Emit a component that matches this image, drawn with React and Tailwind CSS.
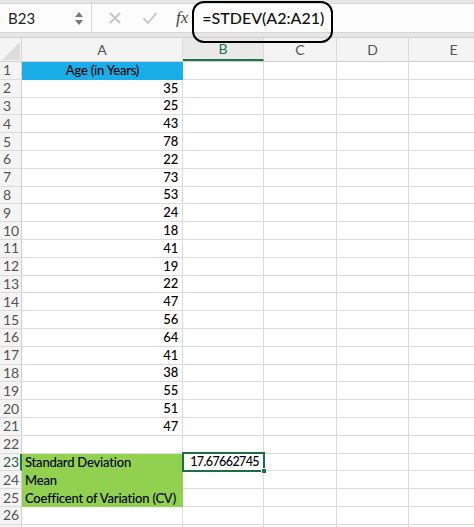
const ages = [35, 25, 43, 78, 22, 73, 53, 24, 18, 41, 19, 22, 47, 56, 64, 41, 38, 55, 51, 47];

const font = { fontFamily: "Lato, 'Liberation Sans', sans-serif" };

function rowData(n) {
  if (n === 1) return { A: "Age (in Years)", aStyle: "bg-[#1aaee8] justify-center text-[#0d2433]", fill: true };
  if (n >= 2 && n <= 21) return { A: String(ages[n - 2]), aStyle: "justify-end pr-[4px]" };
  if (n === 23) return { A: "Standard Deviation", B: "17.67662745", aStyle: "bg-[#92d050] pl-[3px]", fill: true };
  if (n === 24) return { A: "Mean", aStyle: "bg-[#92d050] pl-[3px]", fill: true };
  if (n === 25) return { A: "Coefficent of Variation (CV)", aStyle: "bg-[#92d050] pl-[3px]", fill: true };
  return { aStyle: "" };
}

function Toolbar() {
  return (
    <div className="h-[38px] bg-[#e6e6e6] pt-[3px] border-b border-[#d0d0d0]">
      <div className="h-[30px] bg-[#fdfdfd] flex items-center border-y border-[#d6d6d6]">
        <div className="w-[92px] h-full flex items-center justify-between pl-[8px] pr-[8px] border-r border-[#d6d6d6]">
          <span className="text-[15px] text-[#222]">B23</span>
          <div className="flex flex-col items-center gap-[3px]">
            <div className="w-0 h-0 border-l-[4px] border-r-[4px] border-b-[5px] border-l-transparent border-r-transparent border-b-[#777]" />
            <div className="w-0 h-0 border-l-[4px] border-r-[4px] border-t-[5px] border-l-transparent border-r-transparent border-t-[#777]" />
          </div>
        </div>
        <svg className="ml-[16px]" width="14" height="14" viewBox="0 0 14 14">
          <path d="M2 2 L12 12 M12 2 L2 12" stroke="#c4c4c4" strokeWidth="1.8" />
        </svg>
        <svg className="ml-[20px]" width="16" height="14" viewBox="0 0 16 14">
          <path d="M1.5 7.5 L6 12 L14.5 2" stroke="#c4c4c4" strokeWidth="1.8" fill="none" />
        </svg>
        <span className="ml-[18px] text-[17px] italic text-[#444]" style={{ fontFamily: "'Liberation Serif', serif" }}>
          fx
        </span>
        <span className="ml-[14px] text-[16px] font-medium text-[#111]">=STDEV(A2:A21)</span>
      </div>
    </div>
  );
}

const cols = [
  { key: "A", w: "w-[161px]" },
  { key: "B", w: "w-[81px]" },
  { key: "C", w: "w-[73px]" },
  { key: "D", w: "w-[72px]" },
  { key: "E", w: "w-[90px]" },
];

function HeaderRow() {
  return (
    <div className="flex h-[24px] bg-[#f4f4f4] border-b border-[#cfcfcf]">
      <div className="w-[22px] shrink-0 relative border-r border-[#d4d4d4]">
        <svg className="absolute right-[1px] bottom-[1px]" width="18" height="18" viewBox="0 0 18 18">
          <path d="M18 0 L18 18 L0 18 Z" fill="#dcdcdc" />
        </svg>
      </div>
      {cols.map((c) => (
        <div
          key={c.key}
          className={`${c.w} shrink-0 flex items-center justify-center text-[14px] border-r border-[#dcdcdc] ${
            c.key === "B" ? "text-[#217346] bg-[#e9e9e9] border-b-2 border-b-[#217346]" : "text-[#555]"
          }`}
        >
          {c.key}
        </div>
      ))}
    </div>
  );
}

function Row({ n }) {
  const d = rowData(n);
  const selected = n === 23;
  return (
    <div className="flex h-[17.8px] leading-none whitespace-nowrap">
      <div
        className={`w-[22px] shrink-0 flex items-center pl-[3px] text-[14px] bg-[#f4f4f4] border-b border-[#dcdcdc] ${
          selected ? "text-[#2e5e3e] border-r-2 border-r-[#217346]" : "text-[#555] border-r border-r-[#d0d0d0]"
        }`}
      >
        {n}
      </div>
      <div
        className={`w-[161px] shrink-0 flex items-center text-[13px] font-medium tracking-[-0.2px] text-black ${
          d.fill ? "" : "border-r border-b border-[#dcdcdc]"
        } ${d.aStyle}`}
      >
        {d.A}
      </div>
      <div className="w-[81px] shrink-0 flex items-center justify-end pr-[4px] text-[12.5px] font-medium tracking-[-0.6px] text-black border-r border-b border-[#dcdcdc]">
        {d.B}
      </div>
      <div className="w-[73px] shrink-0 border-r border-b border-[#dcdcdc]" />
      <div className="w-[72px] shrink-0 border-r border-b border-[#dcdcdc]" />
      <div className="w-[90px] shrink-0 border-r border-b border-[#dcdcdc]" />
    </div>
  );
}

export default function App() {
  const rows = Array.from({ length: 27 }, (_, i) => i + 1);
  return (
    <div className="w-[474px] h-[527px] overflow-hidden bg-white relative" style={font}>
      <Toolbar />
      <HeaderRow />
      {rows.map((n) => (
        <Row key={n} n={n} />
      ))}
      {/* active cell B23 */}
      <div className="absolute left-[182px] top-[452px] w-[83px] h-[20px] border-2 border-[#1e6e42] pointer-events-none">
        <div className="absolute -right-[4px] -bottom-[4px] w-[6px] h-[6px] bg-[#217346] border border-white" />
      </div>
      {/* annotation round the formula */}
      <div className="absolute left-[192px] top-[1px] w-[141px] h-[42px] border-[2.5px] border-black rounded-[12px] pointer-events-none" />
    </div>
  );
}
